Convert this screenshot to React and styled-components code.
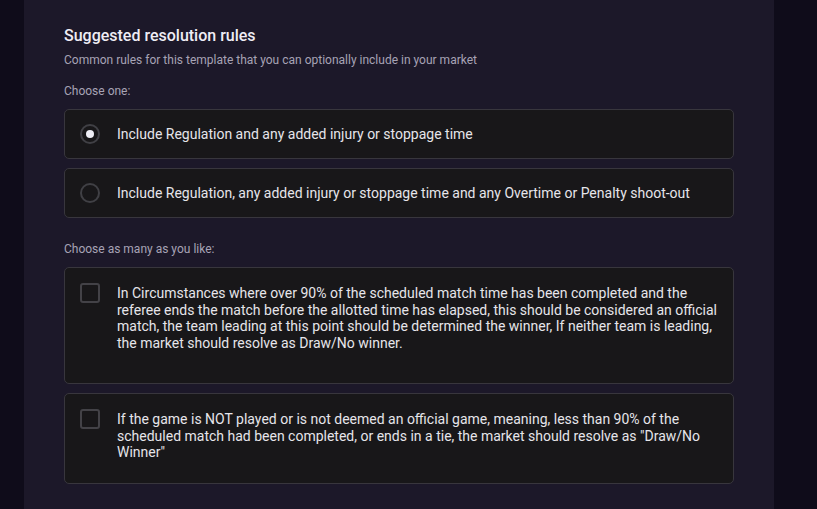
import React, { useState } from 'react';
import styled, { createGlobalStyle } from 'styled-components';

const GlobalStyle = createGlobalStyle`
  html, body {
    margin: 0;
    padding: 0;
    background: #0f0c1a;
  }
  body {
    font-family: Roboto, "Liberation Sans", sans-serif;
    -webkit-font-smoothing: antialiased;
  }
`;

const Page = styled.div`
  height: 509px;
  overflow: hidden;
  padding: 0 43px 0 24px;
  background: #0f0c1a;
`;

const Panel = styled.section`
  height: 100%;
  background: #1c1829;
  padding: 26px 40px 0;
  box-sizing: border-box;
`;

const Title = styled.h2`
  margin: 0;
  font-size: 16px;
  font-weight: 500;
  line-height: 20px;
  color: #efedf5;
`;

const Subtitle = styled.p`
  margin: 7px 0 0;
  font-size: 12px;
  line-height: 15px;
  color: #a7a3b5;
`;

const GroupLabel = styled.p`
  margin: ${p => p.$top}px 0 10px;
  font-size: 12px;
  line-height: 15px;
  color: #a7a3b5;
`;

const List = styled.div`
  display: flex;
  flex-direction: column;
  gap: 9px;
`;

const Card = styled.label`
  display: flex;
  align-items: ${p => (p.$center ? 'center' : 'flex-start')};
  gap: 17px;
  min-height: ${p => p.$minHeight || 0}px;
  box-sizing: border-box;
  padding: ${p => (p.$center ? '0 15px' : '15px 15px')};
  background: #181719;
  border: 1px solid #38363d;
  border-radius: 5px;
  cursor: pointer;
`;

const Radio = styled.span`
  flex: none;
  width: 20px;
  height: 20px;
  box-sizing: border-box;
  border-radius: 50%;
  border: 2px solid #404045;
  display: flex;
  align-items: center;
  justify-content: center;

  &::after {
    content: '';
    width: 8px;
    height: 8px;
    border-radius: 50%;
    background: #eeeef5;
    display: ${p => (p.$checked ? 'block' : 'none')};
  }
`;

const Checkbox = styled.span`
  flex: none;
  width: 20px;
  height: 20px;
  box-sizing: border-box;
  border: 2px solid #434247;
  border-radius: 3px;
`;

const CardText = styled.span`
  font-size: 14px;
  line-height: 16.5px;
  color: #e6e5ea;
  margin-top: ${p => (p.$center ? 0 : 2)}px;
`;

const oneOf = [
  'Include Regulation and any added injury or stoppage time',
  'Include Regulation, any added injury or stoppage time and any Overtime or Penalty shoot-out',
];

const manyOf = [
  {
    text: 'In Circumstances where over 90% of the scheduled match time has been completed and the referee ends the match before the allotted time has elapsed, this should be considered an official match, the team leading at this point should be determined the winner, If neither team is leading, the market should resolve as Draw/No winner.',
    minHeight: 117,
  },
  {
    text: 'If the game is NOT played or is not deemed an official game, meaning, less than 90% of the scheduled match had been completed, or ends in a tie, the market should resolve as "Draw/No Winner"',
    minHeight: 91,
  },
];

export default function App() {
  const [choice, setChoice] = useState(0);
  const [checks, setChecks] = useState([false, false]);

  return (
    <>
      <GlobalStyle />
      <Page>
        <Panel>
          <Title>Suggested resolution rules</Title>
          <Subtitle>Common rules for this template that you can optionally include in your market</Subtitle>

          <GroupLabel $top={16}>Choose one:</GroupLabel>
          <List>
            {oneOf.map((text, i) => (
              <Card key={i} $center $minHeight={50} onClick={() => setChoice(i)}>
                <Radio $checked={choice === i} />
                <CardText $center>{text}</CardText>
              </Card>
            ))}
          </List>

          <GroupLabel $top={24}>Choose as many as you like:</GroupLabel>
          <List>
            {manyOf.map((item, i) => (
              <Card
                key={i}
                $minHeight={item.minHeight}
                onClick={() => setChecks(c => c.map((v, j) => (j === i ? !v : v)))}
              >
                <Checkbox $checked={checks[i]} />
                <CardText>{item.text}</CardText>
              </Card>
            ))}
          </List>
        </Panel>
      </Page>
    </>
  );
}
